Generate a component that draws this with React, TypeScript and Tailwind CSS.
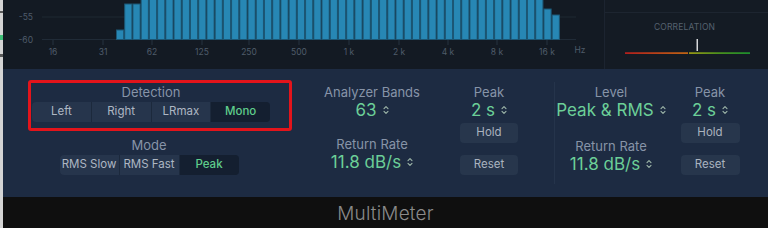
import React from "react";

const FREQS: [string, number][] = [
  ["16", 53],
  ["31", 103],
  ["62", 152],
  ["125", 202],
  ["250", 249],
  ["500", 299],
  ["1 k", 349],
  ["2 k", 399],
  ["4 k", 448],
  ["8 k", 497],
  ["16 k", 547],
];

// bar tops in page px; anything clipped at the top uses -2
const BAR_TOPS = Array.from({ length: 54 }, (_, i) => {
  if (i === 0) return 30;
  if (i === 1 || i === 2) return 4;
  if (i === 52) return 9;
  if (i === 53) return 15;
  return -2;
});

function UpDown({ className = "" }: { className?: string }) {
  return (
    <svg
      width="6"
      height="10"
      viewBox="0 0 6 10"
      className={className}
      fill="none"
      stroke="currentColor"
      strokeWidth="1.1"
      strokeLinecap="round"
      strokeLinejoin="round"
    >
      <path d="M1 3.6 3 1.6 5 3.6" />
      <path d="M1 6.4 3 8.4 5 6.4" />
    </svg>
  );
}

function Spectrum() {
  const ox = 3;
  return (
    <svg width="601" height="69" className="block">
      <line x1={42 - ox} x2={576 - ox} y1="17" y2="17" stroke="#1e2833" />
      <line x1={42 - ox} x2={576 - ox} y1="39.5" y2="39.5" stroke="#202b37" />
      <text x={33 - ox} y="20" textAnchor="end" fontSize="8.5" fill="#4f5c6a" fontFamily="Inter">
        -55
      </text>
      <text x={33 - ox} y="43" textAnchor="end" fontSize="8.5" fill="#4f5c6a" fontFamily="Inter">
        -60
      </text>
      {BAR_TOPS.map((top, i) => {
        const x = 116 + i * 8.22 - ox;
        return (
          <rect
            key={i}
            x={x + 0.5}
            y={top}
            width={7.2}
            height={39.5 - top}
            fill="#2787b4"
            stroke="#1c5775"
            strokeWidth="1"
          />
        );
      })}
      {FREQS.map(([label, x]) => (
        <g key={label}>
          <line x1={x - ox} x2={x - ox} y1="40" y2="45" stroke="#263241" />
          <text
            x={x - ox}
            y="54.5"
            textAnchor="middle"
            fontSize="8.5"
            fill="#4f5c6a"
            fontFamily="Inter"
          >
            {label}
          </text>
        </g>
      ))}
      <text x={580 - ox} y="52.5" textAnchor="middle" fontSize="8.5" fill="#4f5c6a" fontFamily="Inter">
        Hz
      </text>
    </svg>
  );
}

function Correlation() {
  return (
    <div className="flex-1 flex flex-col bg-[#141b24]">
      <div className="h-[13px] border-b border-[#1d2530]" />
      <div className="mt-[9px] text-center text-[8.5px] leading-[10px] tracking-[0.02em] text-[#56626f] pr-[4px]">
        CORRELATION
      </div>
      <svg width="163" height="30" className="block mt-[1px]">
        <defs>
          <linearGradient id="corrL" x1="0" x2="1" y1="0" y2="0">
            <stop offset="0" stopColor="#c21f1c" />
            <stop offset="1" stopColor="#d26d12" />
          </linearGradient>
          <linearGradient id="corrR" x1="0" x2="1" y1="0" y2="0">
            <stop offset="0" stopColor="#a5a412" />
            <stop offset="0.5" stopColor="#4f9c1c" />
            <stop offset="1" stopColor="#1d9a2e" />
          </linearGradient>
        </defs>
        <rect x="20" y="19.3" width="63" height="1.6" fill="url(#corrL)" />
        <rect x="84" y="19.3" width="61" height="1.6" fill="url(#corrR)" />
        <rect x="91.5" y="6" width="1.5" height="12" fill="#d6d8da" />
      </svg>
    </div>
  );
}

function Segmented({ items, active }: { items: string[]; active: string }) {
  return (
    <div className="flex h-[20px] rounded-[4px] overflow-hidden bg-[#1c293c] gap-px">
      {items.map((it) => (
        <div
          key={it}
          className={
            it === active
              ? "w-[59px] flex items-center justify-center bg-[#141f30] text-[#5fcd8c] text-[11.5px] font-medium"
              : "w-[59px] flex items-center justify-center bg-[#26354c] text-[#aeb7c3] text-[11.5px]"
          }
        >
          {it}
        </div>
      ))}
    </div>
  );
}

function Button({ label, className = "" }: { label: string; className?: string }) {
  return (
    <div
      className={`h-[20px] rounded-[4px] bg-[#27364c] text-[#aab3bf] text-[11.5px] flex items-center justify-center ${className}`}
    >
      {label}
    </div>
  );
}

function Title({ children }: { children: React.ReactNode }) {
  return <div className="text-[13px] leading-[16px] text-[#8794a8] text-center">{children}</div>;
}

function Value({ children, className = "" }: { children: React.ReactNode; className?: string }) {
  return (
    <div
      className={`flex items-center justify-center gap-[6px] text-[17px] leading-[20px] text-[#6ccf98] ${className}`}
    >
      <span>{children}</span>
      <UpDown className="text-[#9fb8aa]" />
    </div>
  );
}

export default function App() {
  return (
    <div className="w-[768px] h-[228px] flex bg-black overflow-hidden font-['Inter',sans-serif]">
      <div className="w-[3px] shrink-0 flex flex-col bg-[#d4d4d4]">
        <div className="mt-[11px] h-[2px] bg-[#5a5a5a]" />
        <div className="mt-[22px] h-[5px] bg-[#3fbf78]" />
        <div className="mt-[14px] h-[3px] bg-[#5a5a5a]" />
      </div>

      <div className="flex-1 flex flex-col">
        {/* analyzer + correlation */}
        <div className="h-[69px] flex bg-[#131a23]">
          <Spectrum />
          <div className="w-px bg-[#1c2430]" />
          <Correlation />
        </div>

        {/* settings panel */}
        <div className="h-[130px] flex bg-[#1d2b42]">
          <div className="w-[25px] shrink-0" />

          <div className="w-[264px] shrink-0 flex flex-col">
            <div className="mt-[11px] h-[51px] border-[3px] border-[#e3141b] rounded-[3px] pl-px pt-px">
              <div className="w-[238px]">
                <Title>Detection</Title>
                <div className="mt-[2px]">
                  <Segmented items={["Left", "Right", "LRmax", "Mono"]} active="Mono" />
                </div>
              </div>
            </div>
            <div className="mt-[6px] w-[242px] flex flex-col items-center">
              <Title>Mode</Title>
              <div className="mt-[2px]">
                <Segmented items={["RMS Slow", "RMS Fast", "Peak"]} active="Peak" />
              </div>
            </div>
          </div>

          <div className="w-[20px] shrink-0" />

          <div className="w-[120px] shrink-0 flex flex-col pt-[15px]">
            <Title>Analyzer Bands</Title>
            <Value>63</Value>
            <div className="mt-[16px]">
              <Title>Return Rate</Title>
            </div>
            <Value>11.8 dB/s</Value>
          </div>

          <div className="w-[114px] shrink-0 flex flex-col items-center pt-[15px]">
            <Title>Peak</Title>
            <Value>2 s</Value>
            <Button label="Hold" className="mt-[3px] w-[58px]" />
            <Button label="Reset" className="mt-[12px] w-[58px]" />
          </div>

          <div className="w-[8px] shrink-0" />
          <div className="w-px my-[13px] bg-[#25344b]" />

          <div className="w-[112px] shrink-0 flex flex-col pt-[15px]">
            <Title>Level</Title>
            <Value>Peak &amp; RMS</Value>
            <div className="mt-[18px]">
              <Title>Return Rate</Title>
            </div>
            <Value>11.8 dB/s</Value>
          </div>

          <div className="w-[86px] shrink-0 flex flex-col items-center pt-[15px]">
            <Title>Peak</Title>
            <Value>2 s</Value>
            <Button label="Hold" className="mt-[3px] w-[59px]" />
            <Button label="Reset" className="mt-[12px] w-[59px]" />
          </div>
        </div>

        {/* footer */}
        <div className="flex-1 flex items-center justify-center bg-[#0f0f0f]">
          <span className="text-[19px] font-light text-[#8a8a8a] tracking-[0.01em] mt-[3px]">
            MultiMeter
          </span>
        </div>
      </div>
    </div>
  );
}
